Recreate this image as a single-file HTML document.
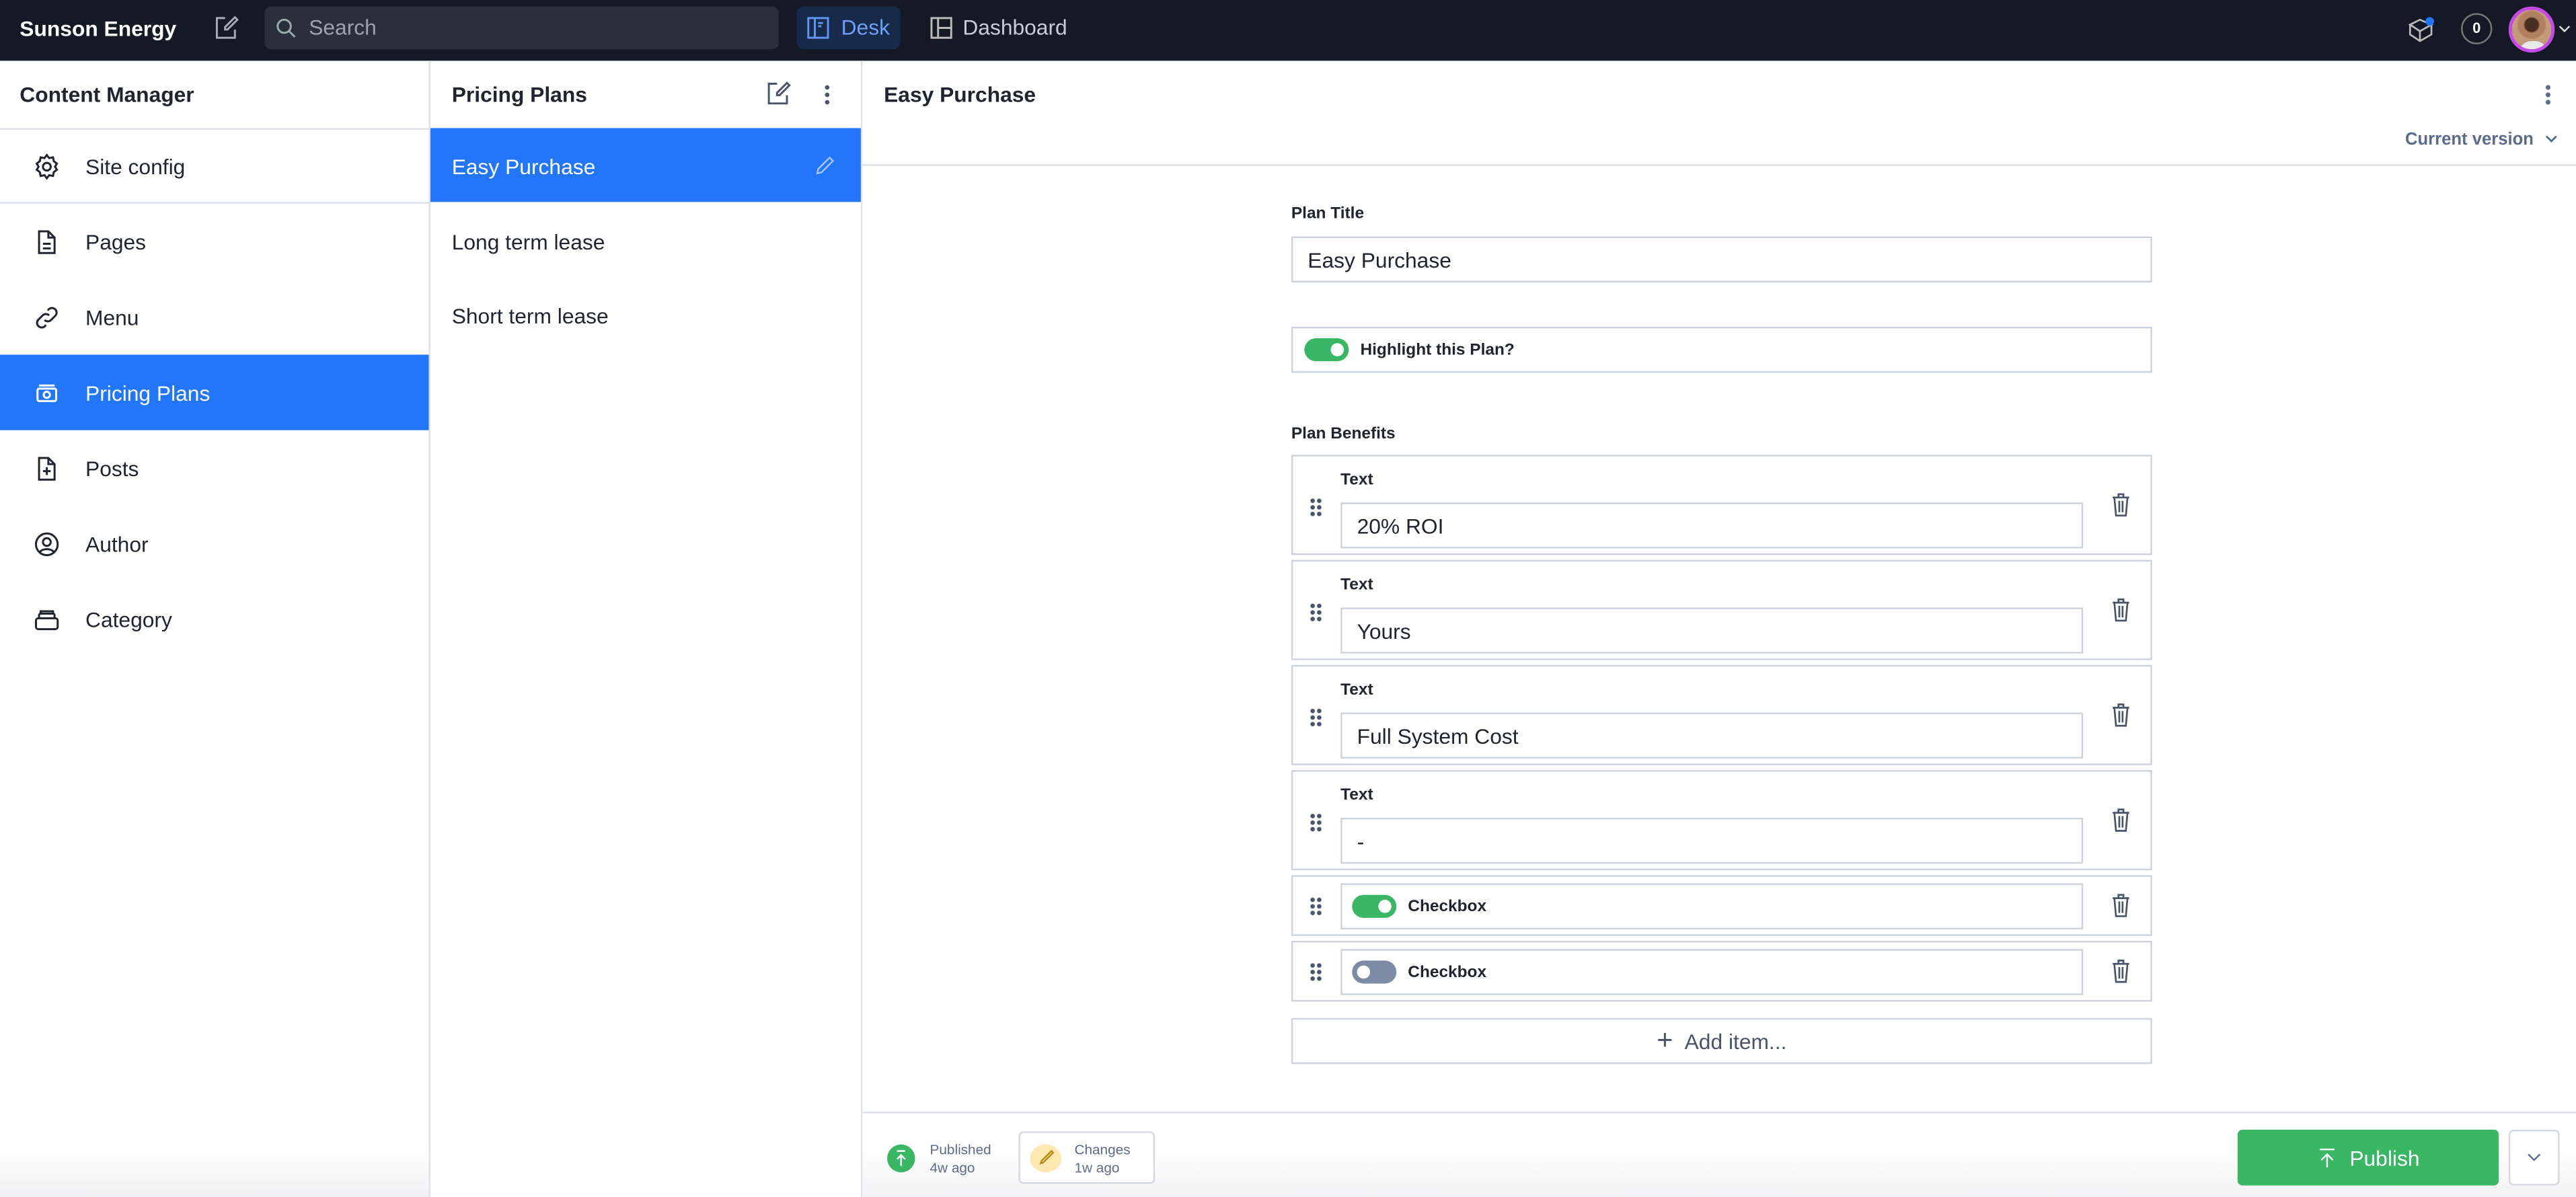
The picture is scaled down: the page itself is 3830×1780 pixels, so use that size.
<!DOCTYPE html>
<html><head><meta charset="utf-8"><style>
*{box-sizing:border-box;margin:0;padding:0}
body{width:3830px;height:1780px;overflow:hidden;background:#fff;font-family:"Liberation Sans",Arial,sans-serif;color:#1f2430}
#r{position:absolute;left:0;top:0;width:1568px;height:729px;transform:scale(2.4426,2.4417);transform-origin:0 0}
.a{position:absolute}
.top{left:0;top:0;width:1568px;height:37px;background:#131a26}
.w{color:#fff}
.nav{font-size:13px;color:#1f2430;display:flex;align-items:center;height:46px;width:261px;padding-left:20px}
.nav svg{width:17px;height:17px;margin-right:15px}
.lbl{font-size:10px;font-weight:bold;color:#1f2430}
.inp{border:1px solid #cdd2dc;background:#fff;font-size:13px;display:flex;align-items:center;padding-left:9px}
.item{border:1px solid #cdd2dc;left:786px;width:524px}
.dots{position:absolute;left:10px;width:8px;height:12px;background:radial-gradient(circle,#4a5468 1.2px,transparent 1.5px) 0 0/4px 4px}
.trash{position:absolute;left:498px}
</style></head><body><div id="r">
<div class="a top"></div>
<div class="a w" style="left:12px;top:10px;font-size:13px;font-weight:bold">Sunson Energy</div>
<svg class="a" style="left:130px;top:9px" width="16" height="16" viewBox="0 0 16 16" fill="none" stroke="#aab" stroke-width="1.2"><path d="M7 2H2v12h11V9"/><path d="M13 1.5l1.5 1.5-6 6H7V7.5z"/></svg>
<div class="a" style="left:161px;top:4px;width:313px;height:26px;background:#2a303b;border-radius:4px"></div>
<svg class="a" style="left:167px;top:10px" width="14" height="14" viewBox="0 0 14 14" fill="none" stroke="#9aa" stroke-width="1.2"><circle cx="6" cy="6" r="4"/><path d="M9 9l3.5 3.5"/></svg>
<div class="a" style="left:188px;top:9px;font-size:13px;color:#9ca3af">Search</div>
<div class="a" style="left:485px;top:4px;width:63px;height:26px;background:#172a4a;border-radius:4px"></div>
<svg class="a" style="left:491px;top:10px" width="14" height="14" viewBox="0 0 14 14" fill="none" stroke="#5e95f2" stroke-width="1.2"><rect x="1" y="1" width="12" height="12"/><path d="M5 1v12M7 4h3M7 6h2"/></svg>
<div class="a" style="left:512px;top:9px;font-size:13px;color:#6ea0f7">Desk</div>
<svg class="a" style="left:566px;top:10px" width="14" height="14" viewBox="0 0 14 14" fill="none" stroke="#bbb" stroke-width="1.2"><rect x="1" y="1" width="12" height="12"/><path d="M5 1v12M5 7h8"/></svg>
<div class="a" style="left:586px;top:9px;font-size:13px;color:#c8ccd4">Dashboard</div>
<svg class="a" style="left:1465px;top:9px" width="18" height="18" viewBox="0 0 18 18" fill="none" stroke="#bbb" stroke-width="1.1"><path d="M2 6l6-3 7 3-7 4zM2 6v6l6 4 7-4V6M8 10v6"/><circle cx="14" cy="4" r="2.6" fill="#2276fc" stroke="none"/></svg>
<div class="a" style="left:1498px;top:8px;width:19px;height:19px;border:1.5px solid #777;border-radius:50%;color:#fff;font-size:9px;font-weight:bold;text-align:center;line-height:16px">0</div>
<div class="a" style="left:1527px;top:4px;width:28px;height:28px;border-radius:50%;border:2px solid #c54ae8;background:radial-gradient(circle at 50% 38%,#4a2e22 0 4px,#b08060 5px 8px,#c39a7a 9px);overflow:hidden"><div style="position:absolute;left:4px;top:19px;width:18px;height:10px;border-radius:8px 8px 0 0;background:#e8e8e8"></div></div>
<svg class="a" style="left:1557px;top:15px" width="8" height="6" viewBox="0 0 8 6" fill="none" stroke="#ddd"><path d="M1 1l3 3 3-3"/></svg>

<!-- pane1 -->
<div class="a" style="left:12px;top:50px;font-size:13px;font-weight:bold">Content Manager</div>
<div class="a" style="left:0;top:78px;width:261px;height:1px;background:#dde1e8"></div>
<div class="a" style="left:0;top:123px;width:261px;height:1px;background:#dde1e8"></div>
<div class="a" style="left:261px;top:37px;width:1px;height:692px;background:#dde1e8"></div>
<div class="a nav" style="top:78px"><svg viewBox="0 0 18 18" fill="none" stroke="#1f2430" stroke-width="1.3"><circle cx="9" cy="9" r="2.5"/><path d="M9 1.5l1.5 2 2.5-.5.5 2.5 2 1.5-1.2 2 1.2 2-2 1.5-.5 2.5-2.5-.5L9 16.5l-1.5-2-2.5.5-.5-2.5-2-1.5L3.7 9 2.5 7l2-1.5.5-2.5 2.5.5z"/></svg>Site config</div>
<div class="a nav" style="top:124px"><svg viewBox="0 0 18 18" fill="none" stroke="#1f2430" stroke-width="1.3"><path d="M4 2h6l4 4v10H4zM10 2v4h4M6.5 10h5M6.5 13h5"/></svg>Pages</div>
<div class="a nav" style="top:170px"><svg viewBox="0 0 18 18" fill="none" stroke="#1f2430" stroke-width="1.3"><path d="M7.5 10.5a3 3 0 004.2 0l3-3a3 3 0 00-4.2-4.2l-1 1M10.5 7.5a3 3 0 00-4.2 0l-3 3a3 3 0 004.2 4.2l1-1"/></svg>Menu</div>
<div class="a nav" style="top:216px;background:#2276fc;color:#fff"><svg viewBox="0 0 18 18" fill="none" stroke="#fff" stroke-width="1.3"><rect x="3" y="6" width="12" height="8" rx="1"/><circle cx="9" cy="10" r="2"/><path d="M4 4h10"/></svg>Pricing Plans</div>
<div class="a nav" style="top:262px"><svg viewBox="0 0 18 18" fill="none" stroke="#1f2430" stroke-width="1.3"><path d="M4 2h6l4 4v10H4zM10 2v4h4M9 8v5M6.5 10.5h5"/></svg>Posts</div>
<div class="a nav" style="top:308px"><svg viewBox="0 0 18 18" fill="none" stroke="#1f2430" stroke-width="1.3"><circle cx="9" cy="9" r="7"/><circle cx="9" cy="7.5" r="2.5"/><path d="M4.5 14c1.5-2.5 7.5-2.5 9 0"/></svg>Author</div>
<div class="a nav" style="top:354px"><svg viewBox="0 0 18 18" fill="none" stroke="#1f2430" stroke-width="1.3"><rect x="2" y="8" width="14" height="7" rx="1.5"/><path d="M4 8V6a1 1 0 011-1h8a1 1 0 011 1v2M5 5V3.5h8V5"/></svg>Category</div>
<div class="a" style="left:0;top:700px;width:261px;height:29px;background:linear-gradient(#fff,#f0f0f2)"></div>

<!-- pane2 -->
<div class="a" style="left:275px;top:50px;font-size:13px;font-weight:bold">Pricing Plans</div>
<svg class="a" style="left:466px;top:49px" width="16" height="16" viewBox="0 0 16 16" fill="none" stroke="#4a5468" stroke-width="1.2"><path d="M7 2H2v12h11V9"/><path d="M13 1.5l1.5 1.5-6 6H7V7.5z"/></svg>
<div class="a" style="left:502px;top:51px;width:3px;height:13px;background:radial-gradient(circle,#4a5468 1.2px,transparent 1.5px) 0 0/3px 4.5px"></div>
<div class="a" style="left:262px;top:78px;width:262px;height:45px;background:#2276fc"></div>
<div class="a" style="left:275px;top:94px;font-size:13px;color:#fff">Easy Purchase</div>
<svg class="a" style="left:496px;top:95px" width="12" height="12" viewBox="0 0 12 12" fill="none" stroke="#a8c6fb" stroke-width="1"><path d="M9 1l2 2-7 7-2.5.5L2 8z"/></svg>
<div class="a" style="left:275px;top:140px;font-size:13px">Long term lease</div>
<div class="a" style="left:275px;top:185px;font-size:13px">Short term lease</div>
<div class="a" style="left:524px;top:37px;width:1px;height:692px;background:#dde1e8"></div>

<!-- pane3 -->
<div class="a" style="left:538px;top:50px;font-size:13px;font-weight:bold">Easy Purchase</div>
<div class="a" style="left:1549px;top:51px;width:4px;height:13px;background:radial-gradient(circle,#5b6b8c 1.3px,transparent 1.6px) 0 0/4px 4.5px"></div>
<div class="a" style="left:1464px;top:79px;font-size:10.5px;font-weight:bold;color:#5b6b8c">Current version</div>
<svg class="a" style="left:1549px;top:82px" width="8" height="6" viewBox="0 0 8 6" fill="none" stroke="#5b6b8c" stroke-width="1.2"><path d="M1 1l3 3 3-3"/></svg>
<div class="a" style="left:525px;top:100px;width:1043px;height:1px;background:#dde1e8"></div>

<div class="a lbl" style="left:786px;top:125px">Plan Title</div>
<div class="a inp" style="left:786px;top:144px;width:524px;height:28px">Easy Purchase</div>
<div class="a inp" style="left:786px;top:199px;width:524px;height:28px;padding-left:7px"><div style="width:27px;height:14px;border-radius:7px;background:#3ab765;position:relative;margin-right:7px"><div style="position:absolute;right:3px;top:3px;width:8px;height:8px;border-radius:50%;background:#fff"></div></div><span class="lbl">Highlight this Plan?</span></div>
<div class="a lbl" style="left:786px;top:259px">Plan Benefits</div>

<div class="a item" style="top:277px;height:61px"><div class="dots" style="top:25px"></div><div class="a lbl" style="left:29px;top:9px">Text</div><div class="a inp" style="left:29px;top:28px;width:452px;height:28px">20% ROI</div><svg class="trash" style="top:22px" width="12" height="15" viewBox="0 0 12 15" fill="none" stroke="#4a5468" stroke-width="1.1"><path d="M1 3h10M4.5 3V1h3v2M2 3l1 11h6l1-11M5 5v7M7 5v7"/></svg></div>
<div class="a item" style="top:341px;height:61px"><div class="dots" style="top:25px"></div><div class="a lbl" style="left:29px;top:9px">Text</div><div class="a inp" style="left:29px;top:28px;width:452px;height:28px">Yours</div><svg class="trash" style="top:22px" width="12" height="15" viewBox="0 0 12 15" fill="none" stroke="#4a5468" stroke-width="1.1"><path d="M1 3h10M4.5 3V1h3v2M2 3l1 11h6l1-11M5 5v7M7 5v7"/></svg></div>
<div class="a item" style="top:405px;height:61px"><div class="dots" style="top:25px"></div><div class="a lbl" style="left:29px;top:9px">Text</div><div class="a inp" style="left:29px;top:28px;width:452px;height:28px">Full System Cost</div><svg class="trash" style="top:22px" width="12" height="15" viewBox="0 0 12 15" fill="none" stroke="#4a5468" stroke-width="1.1"><path d="M1 3h10M4.5 3V1h3v2M2 3l1 11h6l1-11M5 5v7M7 5v7"/></svg></div>
<div class="a item" style="top:469px;height:61px"><div class="dots" style="top:25px"></div><div class="a lbl" style="left:29px;top:9px">Text</div><div class="a inp" style="left:29px;top:28px;width:452px;height:28px">-</div><svg class="trash" style="top:22px" width="12" height="15" viewBox="0 0 12 15" fill="none" stroke="#4a5468" stroke-width="1.1"><path d="M1 3h10M4.5 3V1h3v2M2 3l1 11h6l1-11M5 5v7M7 5v7"/></svg></div>
<div class="a item" style="top:533px;height:37px"><div class="dots" style="top:12px"></div><div class="a inp" style="left:29px;top:4px;width:452px;height:28px;padding-left:6px"><div style="width:27px;height:14px;border-radius:7px;background:#3ab765;position:relative;margin-right:7px"><div style="position:absolute;right:3px;top:3px;width:8px;height:8px;border-radius:50%;background:#fff"></div></div><span class="lbl">Checkbox</span></div><svg class="trash" style="top:10px" width="12" height="15" viewBox="0 0 12 15" fill="none" stroke="#4a5468" stroke-width="1.1"><path d="M1 3h10M4.5 3V1h3v2M2 3l1 11h6l1-11M5 5v7M7 5v7"/></svg></div>
<div class="a item" style="top:573px;height:37px"><div class="dots" style="top:12px"></div><div class="a inp" style="left:29px;top:4px;width:452px;height:28px;padding-left:6px"><div style="width:27px;height:14px;border-radius:7px;background:#7d8ba7;position:relative;margin-right:7px"><div style="position:absolute;left:3px;top:3px;width:8px;height:8px;border-radius:50%;background:#fff"></div></div><span class="lbl">Checkbox</span></div><svg class="trash" style="top:10px" width="12" height="15" viewBox="0 0 12 15" fill="none" stroke="#4a5468" stroke-width="1.1"><path d="M1 3h10M4.5 3V1h3v2M2 3l1 11h6l1-11M5 5v7M7 5v7"/></svg></div>
<div class="a item" style="top:620px;height:28px;display:flex;align-items:center;justify-content:center;font-size:13px;color:#4a5468"><span style="font-size:17px;margin-right:7px;font-weight:300">+</span>Add item...</div>

<!-- footer -->
<div class="a" style="left:525px;top:677px;width:1043px;height:1px;background:#dde1e8"></div>
<div class="a" style="left:525px;top:678px;width:1043px;height:51px;background:linear-gradient(#fff 40%,#f2f2f4)"></div>
<div class="a" style="left:540px;top:697px;width:17px;height:17px;border-radius:50%;background:#3ab765"></div>
<svg class="a" style="left:543px;top:700px" width="11" height="11" viewBox="0 0 11 11" fill="none" stroke="#fff"><path d="M3 1h5M5.5 10V3.5M3 6l2.5-2.5L8 6"/></svg>
<div class="a" style="left:566px;top:695px;font-size:8.5px;color:#5b6b8c;line-height:11px">Published<br>4w ago</div>
<div class="a" style="left:620px;top:689px;width:83px;height:32px;border:1px solid #d4d8e0;border-radius:3px;background:#fff"></div>
<div class="a" style="left:627px;top:697px;width:19px;height:17px;border-radius:50%;background:#fde9b0"></div>
<svg class="a" style="left:632px;top:700px" width="10" height="10" viewBox="0 0 10 10" fill="none" stroke="#b58a10"><path d="M8 1l1 1-6 6-1.5.5L2 7z"/></svg>
<div class="a" style="left:654px;top:695px;font-size:8.5px;color:#5b6b8c;line-height:11px">Changes<br>1w ago</div>
<div class="a" style="left:1362px;top:688px;width:159px;height:34px;border-radius:3px;background:#3ab765;color:#fff;font-size:13px;display:flex;align-items:center;justify-content:center"><svg width="13" height="13" viewBox="0 0 13 13" fill="none" stroke="#fff" style="margin-right:7px"><path d="M2 1h9M6.5 12V4M3 7.5L6.5 4 10 7.5"/></svg>Publish</div>
<div class="a" style="left:1527px;top:688px;width:31px;height:34px;border:1px solid #d4d8e0;border-radius:3px;background:#fff"></div>
<svg class="a" style="left:1538px;top:702px" width="9" height="6" viewBox="0 0 9 6" fill="none" stroke="#5b6b8c"><path d="M1 1l3.5 3.5L8 1"/></svg>
</div></body></html>
